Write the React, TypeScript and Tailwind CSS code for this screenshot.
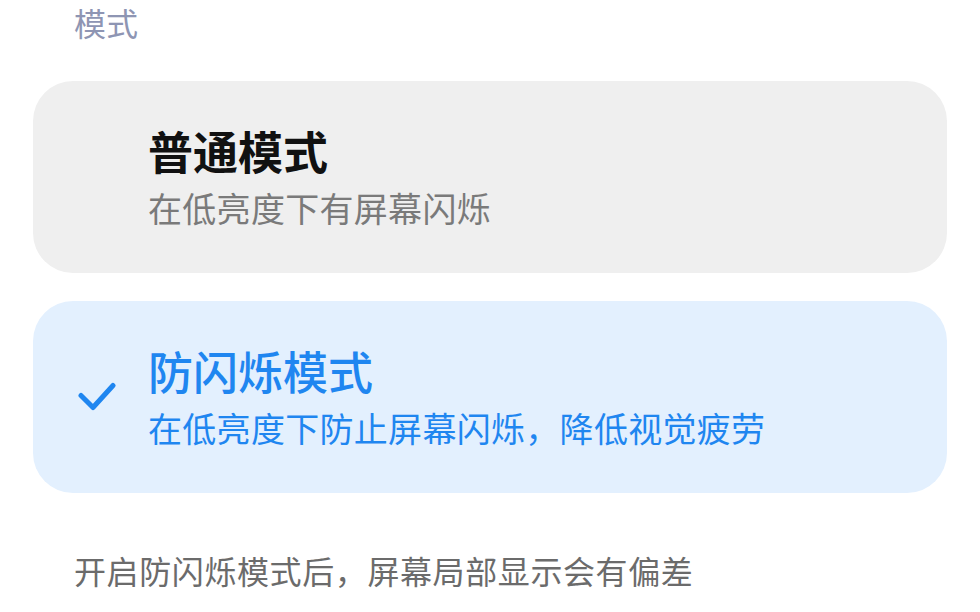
const font = { fontFamily: '"Noto Sans CJK SC", "Noto Sans", sans-serif' }

type ModeCardProps = {
  title: string
  description: string
  selected?: boolean
}

const CheckMark = () => (
  <svg width="40" height="34" viewBox="0 0 40 34" fill="none" className="shrink-0">
    <path
      d="M5 15.5 L17 27.5 L37 5.5"
      stroke="#1f86f0"
      strokeWidth="5"
      strokeLinecap="round"
      strokeLinejoin="round"
    />
  </svg>
)

const ModeCard = ({ title, description, selected }: ModeCardProps) => (
  <div
    className={
      selected
        ? 'flex h-[192px] rounded-[40px] bg-[#e3f0fe]'
        : 'flex h-[192px] rounded-[40px] bg-[#efefef]'
    }
  >
    <div className="flex w-[115px] shrink-0 items-center pl-[43px]">
      {selected && <CheckMark />}
    </div>
    <div className="flex flex-col pt-[42px]">
      <div
        className={
          selected
            ? 'text-[45px] leading-[56px] font-medium text-[#1f86f0]'
            : 'text-[45px] leading-[56px] font-bold text-[#111111]'
        }
      >
        {title}
      </div>
      <div
        className={
          selected
            ? 'mt-[6px] text-[34px] leading-[46px] tracking-[0.3px] text-[#1f86f0]'
            : 'mt-[6px] text-[34px] leading-[46px] tracking-[0.3px] text-[#7a7a7a]'
        }
      >
        {description}
      </div>
    </div>
  </div>
)

export default function App() {
  return (
    <div className="h-[612px] w-[980px] overflow-hidden bg-white" style={font}>
      <div className="pl-[74px] text-[32px] leading-[45px] text-[#8e95b3]">模式</div>
      <div className="mt-[36px] flex flex-col gap-[28px] px-[33px]">
        <ModeCard title="普通模式" description="在低亮度下有屏幕闪烁" />
        <ModeCard
          title="防闪烁模式"
          description="在低亮度下防止屏幕闪烁，降低视觉疲劳"
          selected
        />
      </div>
      <div className="mt-[55px] pl-[74px] text-[32px] leading-[44px] tracking-[0.6px] text-[#6b6b6b]">
        开启防闪烁模式后，屏幕局部显示会有偏差
      </div>
    </div>
  )
}
